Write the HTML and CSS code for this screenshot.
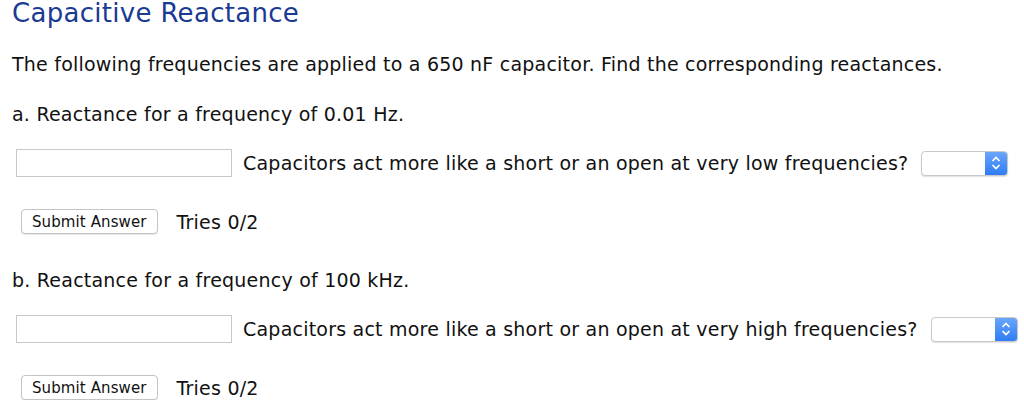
FILE: index.html
```
<!DOCTYPE html>
<html>
<head>
  <meta charset="utf-8">
  <title>Capacitive Reactance</title>
  <link rel="stylesheet" href="styles.css">
</head>
<body>
  <h1 class="title">Capacitive Reactance</h1>
  <p class="intro">The following frequencies are applied to a 650 nF capacitor. Find the corresponding reactances.</p>

  <div class="part">
    <p class="prompt">a. Reactance for a frequency of 0.01 Hz.</p>
    <div class="row">
      <input class="answer" type="text">
      <span class="ask">Capacitors act more like a short or an open at very low frequencies?</span>
      <span class="picker"><span class="arrows"><svg width="12" height="18" viewBox="0 0 12 18"><path d="M2.5 7 L6 3.5 L9.5 7 M2.5 11 L6 14.5 L9.5 11" fill="none" stroke="#fff" stroke-width="1.7"/></svg></span></span>
    </div>
    <div class="submit">
      <button class="btn" type="button">Submit Answer</button>
      <span class="tries">Tries 0/2</span>
    </div>
  </div>

  <div class="part part-b">
    <p class="prompt">b. Reactance for a frequency of 100 kHz.</p>
    <div class="row">
      <input class="answer" type="text">
      <span class="ask">Capacitors act more like a short or an open at very high frequencies?</span>
      <span class="picker"><span class="arrows"><svg width="12" height="18" viewBox="0 0 12 18"><path d="M2.5 7 L6 3.5 L9.5 7 M2.5 11 L6 14.5 L9.5 11" fill="none" stroke="#fff" stroke-width="1.7"/></svg></span></span>
    </div>
    <div class="submit">
      <button class="btn" type="button">Submit Answer</button>
      <span class="tries">Tries 0/2</span>
    </div>
  </div>
</body>
</html>
```
FILE: styles.css
```
body {
  margin: 0;
  padding: 0 0 0 12px;
  font-family: "DejaVu Sans", Verdana, sans-serif;
  font-size: 19px;
  letter-spacing: 0.22px;
  color: #111;
  background: #fff;
}
.title {
  margin: 0;
  font-size: 26px;
  letter-spacing: 0.3px;
  font-weight: normal;
  color: #1b3a94;
  line-height: 26px;
}
.intro {
  margin: 24px 0 0;
  line-height: 28px;
}
.prompt {
  margin: 22px 0 0;
  line-height: 28px;
}
.part-b {
  padding-top: 10px;
}
.row {
  display: flex;
  align-items: center;
  margin-top: 21px;
  padding-left: 4px;
  white-space: nowrap;
}
.answer {
  flex-shrink: 0;
  width: 216px;
  height: 28px;
  box-sizing: border-box;
  margin: 0;
  border: 1px solid #c8c8c8;
  background: #fff;
}
.ask {
  flex-shrink: 0;
  margin-left: 11px;
}
.picker {
  flex-shrink: 0;
  display: inline-flex;
  justify-content: flex-end;
  width: 87px;
  height: 25px;
  box-sizing: border-box;
  margin-left: 13px;
  border: 1px solid #c9c9c9;
  border-radius: 4px;
  background: #fff;
  overflow: hidden;
  box-shadow: 0 1px 1px rgba(0, 0, 0, 0.12);
}
.arrows {
  display: flex;
  align-items: center;
  justify-content: center;
  width: 22px;
  background: linear-gradient(#6aa6fb, #2f7cf6);
}
.submit {
  display: flex;
  align-items: center;
  margin-top: 32px;
  padding-left: 9px;
}
.btn {
  height: 25px;
  padding: 0 10px;
  font-family: "DejaVu Sans", Verdana, sans-serif;
  font-size: 15px;
  letter-spacing: 0.1px;
  color: #111;
  background: #fff;
  border: 1px solid #c4c4c4;
  border-radius: 4px;
  box-shadow: 0 1px 1px rgba(0, 0, 0, 0.1);
}
.tries {
  margin-left: 19px;
}
```
